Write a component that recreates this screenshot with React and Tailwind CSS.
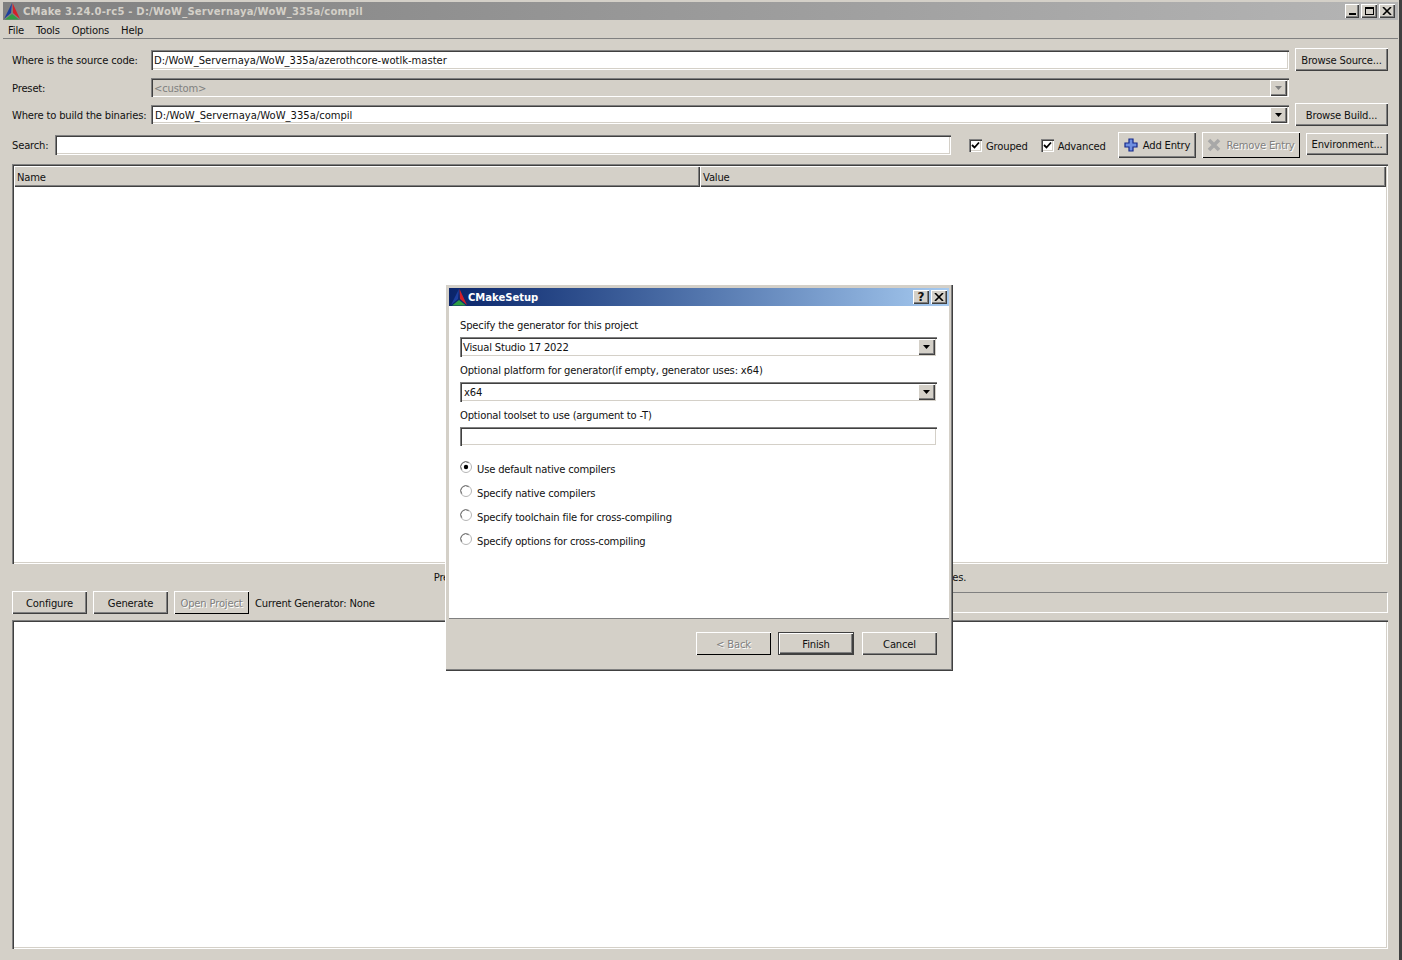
import React from 'react';

const raised = 'bg-[#d4d0c8] shadow-[inset_1px_1px_0_#ffffff,inset_-1px_-1px_0_#404040,inset_-2px_-2px_0_#808080]';
const raisedOff = 'bg-[#d4d0c8] shadow-[inset_1px_1px_0_#ffffff,inset_-1px_-1px_0_#000000,inset_-2px_-2px_0_#d4d0c8]';
const sunken = 'shadow-[inset_1px_1px_0_#808080,inset_2px_2px_0_#404040,inset_-1px_-1px_0_#ffffff,inset_-2px_-2px_0_#d4d0c8]';

const Logo = ({ className = '' }) => (
  <svg width="18" height="17" viewBox="0 0 18 17" className={`shrink-0 ${className}`}>
    <polygon points="9,0 1,16 8,10" fill="#1d3f9e" />
    <polygon points="9.5,0 17,16 10,10" fill="#d4202a" />
    <polygon points="2,16.5 16,16.5 9,11" fill="#2f9e44" />
  </svg>
);

const Arrow = ({ color = '#000000' }) => (
  <svg width="7" height="4" viewBox="0 0 7 4"><polygon points="0,0 7,0 3.5,4" fill={color} /></svg>
);

const Btn = ({ children, className = '', disabled, dark }) => (
  <div className={`${disabled ? raisedOff : raised} ${dark ? 'border border-[#404040]' : ''} flex items-center justify-center whitespace-nowrap shrink-0 pt-[2px] ${disabled ? 'text-[#808080] [text-shadow:1px_1px_0_#ffffff]' : ''} ${className}`}>
    {children}
  </div>
);

const DropBtn = ({ disabled }) => (
  <div className={`${raised} w-[17px] h-[16px] flex items-center justify-center shrink-0`}>
    <Arrow color={disabled ? '#808080' : '#000000'} />
  </div>
);

const Field = ({ children, className = '', dropdown, disabled }) => (
  <div className={`${sunken} ${disabled ? 'bg-[#d4d0c8] text-[#808080]' : 'bg-white'} flex items-center justify-between shrink-0 pl-[3px] pr-[2px] ${className}`}>
    <span className="pt-[2px]">{children}</span>
    {dropdown && <DropBtn disabled={disabled} />}
  </div>
);

const Check = ({ label, className = '' }) => (
  <div className={`flex items-center shrink-0 ${className}`}>
    <div className={`${sunken} bg-white w-[13px] h-[13px] flex items-center justify-center`}>
      <svg width="9" height="9" viewBox="0 0 9 9"><path d="M1 4 L3.5 6.5 L8 1.5" fill="none" stroke="#000" strokeWidth="1.8" /></svg>
    </div>
    <span className="ml-[4px] pt-[3px]">{label}</span>
  </div>
);

const Radio = ({ label, on }) => (
  <div className="h-[24px] flex items-center">
    <svg width="12" height="12" viewBox="0 0 12 12" className="shrink-0 -mt-[2px]">
      <circle cx="6" cy="6" r="5.5" fill="#ffffff" stroke="#b5b5b5" />
      <path d="M1.8 8.8 A5 5 0 0 1 8.8 1.8" fill="none" stroke="#6f6f6f" strokeWidth="1" />
      {on && <circle cx="6" cy="6" r="2.2" fill="#000000" />}
    </svg>
    <span className="ml-[5px] pt-[3px]">{label}</span>
  </div>
);

const TitleBtn = ({ children, className = '' }) => (
  <div className={`${raised} h-[14px] flex items-center justify-center shrink-0 ${className}`}>{children}</div>
);

const CloseGlyph = () => (
  <svg width="10" height="8" viewBox="0 0 10 8"><path d="M1 0 L9 8 M9 0 L1 8" stroke="#000" strokeWidth="1.6" /></svg>
);

export default function App() {
  return (
    <div className="relative w-[1402px] h-[960px] overflow-hidden bg-[#d4d0c8] flex text-[10px] leading-[12px] tracking-[-0.18px] text-[#111111] font-['DejaVu_Sans',sans-serif]">
      <div className="flex-1 flex flex-col min-w-0">
        {/* title bar */}
        <div className="mt-[2px] ml-[3px] mr-[1px] h-[18px] bg-gradient-to-r from-[#808080] to-[#b5b5b5] flex items-center">
          <Logo />
          <span className="ml-[2px] pt-[2px] text-[#d4d0c8] font-bold tracking-[0.22px]">CMake 3.24.0-rc5 - D:/WoW_Servernaya/WoW_335a/compil</span>
          <div className="ml-auto mr-[3px] flex">
            <TitleBtn className="w-[14px] items-end pb-[3px]"><div className="w-[7px] h-[2px] bg-black" /></TitleBtn>
            <TitleBtn className="w-[16px] ml-[2px]"><div className="w-[9px] h-[8px] border border-black border-t-2" /></TitleBtn>
            <TitleBtn className="w-[16px] ml-[2px]"><CloseGlyph /></TitleBtn>
          </div>
        </div>
        {/* menu */}
        <div className="ml-[3px] mr-[1px] h-[19px] pt-[3px] border-b border-[#808080] flex items-center pl-[5px] gap-[12px]">
          <span>File</span><span>Tools</span><span>Options</span><span>Help</span>
        </div>

        <div className="flex-1 pl-[12px] pr-[11px] flex flex-col">
          <div className="mt-[9px] h-[23px] flex items-center">
            <span className="w-[139px] pt-[2px] shrink-0 whitespace-nowrap">Where is the source code:</span>
            <Field className="w-[1138px] h-[20px] tracking-normal">D:/WoW_Servernaya/WoW_335a/azerothcore-wotlk-master</Field>
            <Btn className="ml-[6px] w-[93px] h-[23px]">Browse Source...</Btn>
          </div>
          <div className="mt-[7px] h-[19px] flex items-center">
            <span className="w-[139px] pt-[2px] shrink-0">Preset:</span>
            <Field className="w-[1138px] h-[19px]" dropdown disabled>&lt;custom&gt;</Field>
          </div>
          <div className="mt-[6px] h-[23px] flex items-center">
            <span className="w-[139px] pt-[2px] shrink-0 whitespace-nowrap">Where to build the binaries:</span>
            <Field className="w-[1138px] h-[19px] tracking-normal [&>span]:ml-[1px]" dropdown>D:/WoW_Servernaya/WoW_335a/compil</Field>
            <Btn className="ml-[6px] w-[93px] h-[23px]">Browse Build...</Btn>
          </div>
          <div className="mt-[6px] h-[26px] flex items-center">
            <span className="w-[43px] pt-[2px] shrink-0">Search:</span>
            <Field className="w-[896px] h-[20px]" />
            <Check label="Grouped" className="ml-[18px]" />
            <Check label="Advanced" className="ml-[13px]" />
            <div className="flex-1" />
            <Btn className="w-[78px] h-[26px]">
              <svg width="14" height="14" viewBox="0 0 14 14" className="mr-[5px] -mt-[2px]">
                <path d="M5 1 H9 V5 H13 V9 H9 V13 H5 V9 H1 V5 H5 Z" fill="#6f8fe0" stroke="#14288a" strokeWidth="1.2" />
              </svg>
              Add Entry
            </Btn>
            <Btn className="ml-[6px] w-[98px] h-[26px]" disabled>
              <svg width="14" height="14" viewBox="0 0 14 14" className="mr-[5px] -mt-[2px]">
                <path d="M2 2 L12 12 M12 2 L2 12" stroke="#a8a8a8" strokeWidth="3.6" />
              </svg>
              Remove Entry
            </Btn>
            <Btn className="ml-[6px] w-[82px] h-[22px] -mt-[2px]">Environment...</Btn>
          </div>

          {/* cache table */}
          <div className={`${sunken} mt-[6px] h-[400px] bg-white p-[2px]`}>
            <div className="h-[21px] flex bg-[#d4d0c8]">
              <div className={`${raised} w-[686px] h-full flex items-center pl-[3px] pt-[2px]`}>Name</div>
              <div className={`${raised} flex-1 h-full flex items-center pl-[3px] pt-[2px]`}>Value</div>
            </div>
          </div>

          <div className="h-[27px] flex items-center justify-center">
            Press Configure to update and display new values in red, then press Generate to generate selected build files.
          </div>

          <div className="h-[23px] flex items-center">
            <Btn className="w-[75px] h-[23px]">Configure</Btn>
            <Btn className="ml-[6px] w-[75px] h-[23px]">Generate</Btn>
            <Btn className="ml-[6px] w-[75px] h-[23px]" disabled>Open Project</Btn>
            <span className="ml-[6px] pt-[2px]">Current Generator: None</span>
            <div className="ml-auto w-[800px] h-[21px] border border-[#ffffff] border-t-[#808080] border-l-[#808080]" />
          </div>

          <div className={`${sunken} mt-[6px] h-[329px] bg-white`} />
        </div>
      </div>
      <div className="w-[3px] shrink-0 bg-[#404040]" />

      {/* CMakeSetup dialog */}
      <div className={`${raised} absolute left-[445px] top-[284px] w-[508px] h-[387px] p-[4px] flex flex-col`}>
        <div className="h-[18px] bg-gradient-to-r from-[#0a246a] to-[#a6caf0] flex items-center shrink-0">
          <Logo className="ml-[1px]" />
          <span className="pt-[2px] text-white font-bold tracking-normal">CMakeSetup</span>
          <div className="ml-auto mr-[2px] flex">
            <TitleBtn className="w-[16px] font-bold text-[12px]">?</TitleBtn>
            <TitleBtn className="w-[16px] ml-[2px]"><CloseGlyph /></TitleBtn>
          </div>
        </div>
        <div className="h-[312px] bg-white pl-[11px] pr-[12px] flex flex-col shrink-0">
          <div className="mt-[10px] h-[18px] pt-[2px] flex items-center">Specify the generator for this project</div>
          <Field className="mt-[3px] h-[20px]" dropdown>Visual Studio 17 2022</Field>
          <div className="h-[25px] pt-[2px] flex items-center shrink-0">Optional platform for generator(if empty, generator uses: x64)</div>
          <Field className="h-[20px] [&>span]:ml-[1px]" dropdown>x64</Field>
          <div className="h-[25px] pt-[2px] flex items-center shrink-0">Optional toolset to use (argument to -T)</div>
          <Field className="h-[19px]" />
          <div className="mt-[10px]">
            <Radio label="Use default native compilers" on />
            <Radio label="Specify native compilers" />
            <Radio label="Specify toolchain file for cross-compiling" />
            <Radio label="Specify options for cross-compiling" />
          </div>
        </div>
        <div className="border-t border-[#808080] flex-1 flex justify-end items-start pt-[13px] pr-[12px]">
          <Btn className="w-[75px] h-[23px]" disabled>&lt; Back</Btn>
          <Btn className="ml-[7px] w-[76px] h-[23px]" dark>Finish</Btn>
          <Btn className="ml-[8px] w-[75px] h-[23px]">Cancel</Btn>
        </div>
      </div>
    </div>
  );
}
